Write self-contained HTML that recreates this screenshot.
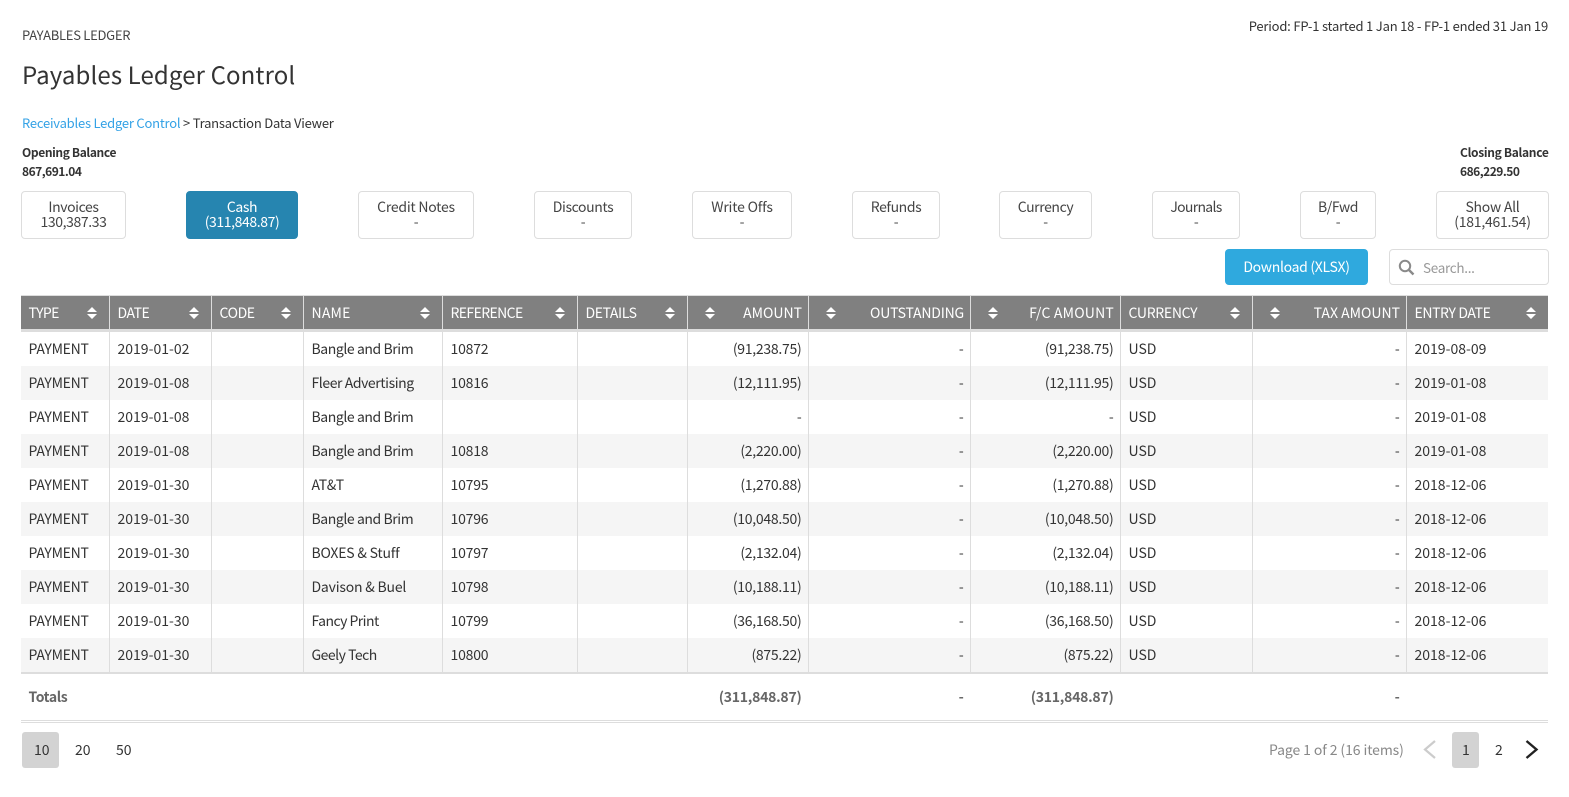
<!DOCTYPE html>
<html><head><meta charset="utf-8"><style>
html,body{margin:0;padding:0;background:#fff;}
body{width:1569px;height:797px;overflow:hidden;position:relative;font-family:"Noto Sans CJK JP","Liberation Sans",sans-serif;font-size:14px;color:#333;}
.a{position:absolute;white-space:nowrap;}
.b{position:absolute;top:191px;height:46px;border:1px solid #ddd;border-radius:4px;text-align:center;font-size:14px;line-height:15px;box-sizing:content-box;color:#444;letter-spacing:-.4px;}
.b div{position:relative;top:8px;}
.b.on{background:#2685b0;border-color:#2685b0;color:#fff;}
table{position:absolute;left:21px;top:295px;width:1527px;border-collapse:separate;border-spacing:0;table-layout:fixed;}
th{height:33px;padding:0 7px 0 7.5px;background:#808080;color:#fff;font-weight:400;font-size:14px;text-align:left;border-top:1px solid #ddd;border-bottom:3px solid #ddd;border-right:1px solid #ddd;position:relative;box-sizing:content-box;white-space:nowrap;line-height:32px;}
th:last-child,td:last-child{border-right:0;}
th svg{position:absolute;top:11px;width:10px;height:12px;}
th.l svg{right:12px;}
th.r svg{left:17px;}
th.r{text-align:right;padding-right:6px;}
td{height:34px;padding:0 6.5px 0 7.5px;border-right:1px solid #ddd;font-size:14px;color:#333;white-space:nowrap;box-sizing:border-box;line-height:34px;overflow:hidden;}
td:nth-child(1){letter-spacing:-.25px;}
td:nth-child(4){letter-spacing:-.42px;}
td:nth-child(5){letter-spacing:-.2px;}
td.r{text-align:right;letter-spacing:-.27px;}
tr.s td{background:#f5f5f5;}
tr.t td{border-right:0;border-top:2px solid #ddd;border-bottom:3px double #ddd;height:51px;padding-top:1px;padding-right:7.5px;font-weight:700;color:#666;line-height:45px;letter-spacing:-.25px;}
.pg{position:absolute;top:732px;height:36px;background:#d3d3d3;border-radius:3px;}
</style></head><body>
<svg width="0" height="0" style="position:absolute"><defs><symbol id="s" viewBox="0 0 10 12"><path d="M5 0L10 5H0ZM0 7H10L5 12Z" fill="#fff"/></symbol></defs></svg>
<div class="a" style="right:21px;top:16px;line-height:20px;font-size:13px;letter-spacing:-.19px;">Period: FP-1 started 1 Jan 18 - FP-1 ended 31 Jan 19</div>
<div class="a" style="left:22px;top:26px;line-height:18px;font-size:13px;color:#444;letter-spacing:-.27px;">PAYABLES LEDGER</div>
<div class="a" style="left:22px;top:57px;line-height:34px;font-size:24px;letter-spacing:.12px;">Payables Ledger Control</div>
<div class="a" style="left:22px;top:114px;line-height:18px;font-size:13px;letter-spacing:-.22px;"><span style="color:#34a2e6;">Receivables Ledger Control</span> &gt; Transaction Data Viewer</div>
<div class="a" style="left:22px;top:143px;line-height:19px;font-size:12px;font-weight:700;letter-spacing:-.37px;">Opening Balance<br><span style="letter-spacing:-.5px">867,691.04</span></div>
<div class="a" style="left:1460px;top:143px;line-height:19px;font-size:12px;font-weight:700;letter-spacing:-.3px;">Closing Balance<br><span style="letter-spacing:-.5px">686,229.50</span></div>

<div class="b" style="left:21px;width:103px;"><div>Invoices<br>130,387.33</div></div>
<div class="b on" style="left:186px;width:110px;"><div>Cash<br>(311,848.87)</div></div>
<div class="b" style="left:358px;width:114px;"><div style="letter-spacing:-.25px">Credit Notes<br>-</div></div>
<div class="b" style="left:534px;width:96px;"><div>Discounts<br>-</div></div>
<div class="b" style="left:692px;width:98px;"><div style="letter-spacing:-.2px">Write Offs<br>-</div></div>
<div class="b" style="left:852px;width:86px;"><div>Refunds<br>-</div></div>
<div class="b" style="left:999px;width:91px;"><div>Currency<br>-</div></div>
<div class="b" style="left:1152px;width:86px;"><div style="letter-spacing:-.7px">Journals<br>-</div></div>
<div class="b" style="left:1300px;width:74px;"><div>B/Fwd<br>-</div></div>
<div class="b" style="left:1436px;width:111px;"><div style="letter-spacing:-.25px">Show All<br>(181,461.54)</div></div>

<div class="a" style="left:1225px;top:249px;width:143px;height:36px;background:#2fa9de;border-radius:4px;color:#fff;text-align:center;line-height:37px;letter-spacing:-.3px;">Download (XLSX)</div>
<div class="a" style="left:1389px;top:249px;width:158px;height:34px;border:1px solid #ddd;border-radius:4px;"></div>
<svg class="a" style="left:1398px;top:259px;" width="17" height="17" viewBox="0 0 17 17"><circle cx="7" cy="7" r="5.2" fill="none" stroke="#8a8a8a" stroke-width="2"/><path d="M11 11L15.5 15.5" stroke="#8a8a8a" stroke-width="2.4"/></svg>
<div class="a" style="left:1423px;top:258px;line-height:18px;font-size:13.5px;color:#999;letter-spacing:-.3px;">Search...</div>

<table>
<colgroup><col style="width:89px"><col style="width:102px"><col style="width:92px"><col style="width:139px"><col style="width:135px"><col style="width:110px"><col style="width:121px"><col style="width:162px"><col style="width:150px"><col style="width:132px"><col style="width:154px"><col style="width:141px"></colgroup>
<thead><tr>
<th class="l" style="letter-spacing:-.6px">TYPE<svg><use href="#s"/></svg></th>
<th class="l" style="letter-spacing:-.5px">DATE<svg><use href="#s"/></svg></th>
<th class="l" style="letter-spacing:-.4px">CODE<svg><use href="#s"/></svg></th>
<th class="l" style="letter-spacing:.2px">NAME<svg><use href="#s"/></svg></th>
<th class="l" style="letter-spacing:-.6px">REFERENCE<svg><use href="#s"/></svg></th>
<th class="l" style="letter-spacing:-.4px">DETAILS<svg><use href="#s"/></svg></th>
<th class="r">AMOUNT<svg><use href="#s"/></svg></th>
<th class="r" style="letter-spacing:-.2px">OUTSTANDING<svg><use href="#s"/></svg></th>
<th class="r" style="letter-spacing:.2px">F/C AMOUNT<svg><use href="#s"/></svg></th>
<th class="l" style="letter-spacing:-.3px">CURRENCY<svg><use href="#s"/></svg></th>
<th class="r">TAX AMOUNT<svg><use href="#s"/></svg></th>
<th class="l" style="letter-spacing:-.4px">ENTRY DATE<svg><use href="#s"/></svg></th>
</tr></thead>
<tbody>
<tr><td>PAYMENT</td><td>2019-01-02</td><td></td><td>Bangle and Brim</td><td>10872</td><td></td><td class="r">(91,238.75)</td><td class="r">-</td><td class="r">(91,238.75)</td><td>USD</td><td class="r">-</td><td>2019-08-09</td></tr>
<tr class="s"><td>PAYMENT</td><td>2019-01-08</td><td></td><td>Fleer Advertising</td><td>10816</td><td></td><td class="r">(12,111.95)</td><td class="r">-</td><td class="r">(12,111.95)</td><td>USD</td><td class="r">-</td><td>2019-01-08</td></tr>
<tr><td>PAYMENT</td><td>2019-01-08</td><td></td><td>Bangle and Brim</td><td></td><td></td><td class="r">-</td><td class="r">-</td><td class="r">-</td><td>USD</td><td class="r">-</td><td>2019-01-08</td></tr>
<tr class="s"><td>PAYMENT</td><td>2019-01-08</td><td></td><td>Bangle and Brim</td><td>10818</td><td></td><td class="r">(2,220.00)</td><td class="r">-</td><td class="r">(2,220.00)</td><td>USD</td><td class="r">-</td><td>2019-01-08</td></tr>
<tr><td>PAYMENT</td><td>2019-01-30</td><td></td><td>AT&amp;T</td><td>10795</td><td></td><td class="r">(1,270.88)</td><td class="r">-</td><td class="r">(1,270.88)</td><td>USD</td><td class="r">-</td><td>2018-12-06</td></tr>
<tr class="s"><td>PAYMENT</td><td>2019-01-30</td><td></td><td>Bangle and Brim</td><td>10796</td><td></td><td class="r">(10,048.50)</td><td class="r">-</td><td class="r">(10,048.50)</td><td>USD</td><td class="r">-</td><td>2018-12-06</td></tr>
<tr><td>PAYMENT</td><td>2019-01-30</td><td></td><td style="letter-spacing:-.2px">BOXES &amp; Stuff</td><td>10797</td><td></td><td class="r">(2,132.04)</td><td class="r">-</td><td class="r">(2,132.04)</td><td>USD</td><td class="r">-</td><td>2018-12-06</td></tr>
<tr class="s"><td>PAYMENT</td><td>2019-01-30</td><td></td><td style="letter-spacing:-.2px">Davison &amp; Buel</td><td>10798</td><td></td><td class="r">(10,188.11)</td><td class="r">-</td><td class="r">(10,188.11)</td><td>USD</td><td class="r">-</td><td>2018-12-06</td></tr>
<tr><td>PAYMENT</td><td>2019-01-30</td><td></td><td style="letter-spacing:-.55px">Fancy Print</td><td>10799</td><td></td><td class="r">(36,168.50)</td><td class="r">-</td><td class="r">(36,168.50)</td><td>USD</td><td class="r">-</td><td>2018-12-06</td></tr>
<tr class="s"><td>PAYMENT</td><td>2019-01-30</td><td></td><td style="letter-spacing:-.5px">Geely Tech</td><td>10800</td><td></td><td class="r">(875.22)</td><td class="r">-</td><td class="r">(875.22)</td><td>USD</td><td class="r">-</td><td>2018-12-06</td></tr>
<tr class="t"><td style="letter-spacing:-.4px">Totals</td><td></td><td></td><td></td><td></td><td></td><td class="r">(311,848.87)</td><td class="r">-</td><td class="r">(311,848.87)</td><td></td><td class="r">-</td><td></td></tr>
</tbody></table>

<div class="pg" style="left:22px;width:37px;"></div>
<div class="a" style="left:34px;top:741px;line-height:18px;">10</div>
<div class="a" style="left:75px;top:741px;line-height:18px;">20</div>
<div class="a" style="left:116px;top:741px;line-height:18px;">50</div>
<div class="a" style="left:1269px;top:741px;line-height:18px;color:#888;letter-spacing:-.1px;">Page 1 of 2 (16 items)</div>
<svg class="a" style="left:1423px;top:739px;" width="14" height="21" viewBox="0 0 14 21"><path d="M12 2L2 10.5L12 19" fill="none" stroke="#ccc" stroke-width="2.2"/></svg>
<div class="pg" style="left:1452px;width:27px;"></div>
<div class="a" style="left:1462px;top:741px;line-height:18px;">1</div>
<div class="a" style="left:1495px;top:741px;line-height:18px;">2</div>
<svg class="a" style="left:1524px;top:739px;" width="15" height="21" viewBox="0 0 15 21"><path d="M2.5 2L12.5 10.5L2.5 19" fill="none" stroke="#222" stroke-width="2.4"/></svg>
</body></html>
